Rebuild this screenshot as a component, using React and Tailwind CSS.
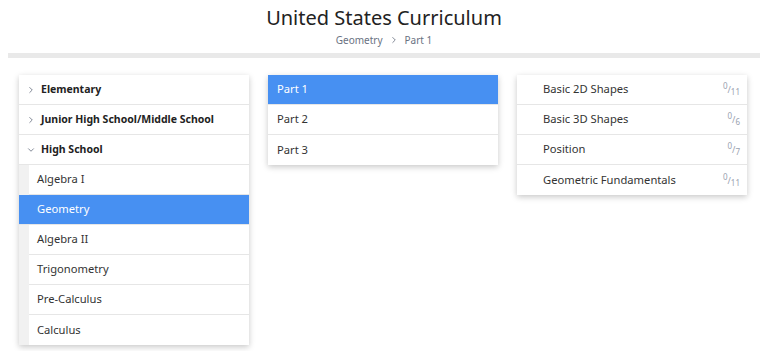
import React from 'react';
import { ChevronRight, ChevronDown } from 'lucide-react';

const font = { fontFamily: '"Noto Sans", "Open Sans", sans-serif' };

const Fraction = ({ done, total }) => (
    <span className="text-[9px] text-gray-400 leading-none">
        <sup className="text-[8px]">{done}</sup>/<sub className="text-[8px]">{total}</sub>
    </span>
);

const App = () => {
    const groups = [
        { name: "Elementary", open: false },
        { name: "Junior High School/Middle School", open: false },
        { name: "High School", open: true },
    ];
    const courses = ["Algebra I", "Geometry", "Algebra II", "Trigonometry", "Pre-Calculus", "Calculus"];
    const parts = ["Part 1", "Part 2", "Part 3"];
    const topics = [
        { name: "Basic 2D Shapes", total: 11 },
        { name: "Basic 3D Shapes", total: 6 },
        { name: "Position", total: 7 },
        { name: "Geometric Fundamentals", total: 11 },
    ];

    return (
        <div className="w-[768px] h-[351px] bg-white overflow-hidden" style={font}>
            <div className="flex flex-col items-center pt-[4px]">
                <h1 className="text-[20px] leading-[28px] text-[#222]">United States Curriculum</h1>
                <div className="flex items-center gap-1.5 text-[10px] leading-[14px] text-gray-500 mt-[1px]">
                    <span>Geometry</span>
                    <ChevronRight className="w-2.5 h-2.5" />
                    <span>Part 1</span>
                </div>
            </div>
            <div className="mx-2 mt-[6px] h-[5px] bg-[#e9e9e9]" />

            <div className="flex items-start px-[19px] pt-[17px] gap-[19px]">
                <div className="w-[230px] bg-white shadow-[0_2px_6px_rgba(0,0,0,0.22)]">
                    {groups.map((g) => (
                        <div key={g.name}>
                            <div className="h-[30px] flex items-center pl-[7px] border-b border-[#e6e6e6] text-[10.5px] font-bold text-[#222]">
                                {g.open ? (
                                    <ChevronDown className="w-2.5 h-2.5 text-gray-500 mr-[5px]" />
                                ) : (
                                    <ChevronRight className="w-2.5 h-2.5 text-gray-500 mr-[5px]" />
                                )}
                                {g.name}
                            </div>
                            {g.open && (
                                <div className="bg-[#f1f1f1]">
                                    {courses.map((c, i) => (
                                        <div
                                            key={c}
                                            className={`h-[30px] flex items-center text-[11.2px] ${
                                                c === "Geometry"
                                                    ? "bg-[#4790f2] text-white pl-[18px]"
                                                    : "bg-white ml-[10px] pl-[8px] text-[#333]"
                                            } ${i < courses.length - 1 ? "border-b border-[#e6e6e6]" : ""}`}
                                        >
                                            {c}
                                        </div>
                                    ))}
                                </div>
                            )}
                        </div>
                    ))}
                </div>

                <div className="w-[230px] bg-white shadow-[0_2px_6px_rgba(0,0,0,0.22)]">
                    {parts.map((p, i) => (
                        <div
                            key={p}
                            className={`h-[30px] flex items-center pl-[9px] text-[11.2px] ${
                                i === 0 ? "bg-[#4790f2] text-white" : "text-[#333]"
                            } ${i < parts.length - 1 ? "border-b border-[#e6e6e6]" : ""}`}
                        >
                            {p}
                        </div>
                    ))}
                </div>

                <div className="w-[230px] bg-white shadow-[0_2px_6px_rgba(0,0,0,0.22)]">
                    {topics.map((t, i) => (
                        <div
                            key={t.name}
                            className={`h-[30px] flex items-center justify-between pl-[26px] pr-[7px] text-[11.2px] text-[#333] ${
                                i < topics.length - 1 ? "border-b border-[#e6e6e6]" : ""
                            }`}
                        >
                            <span>{t.name}</span>
                            <Fraction done={0} total={t.total} />
                        </div>
                    ))}
                </div>
            </div>
        </div>
    );
};

export default App;
